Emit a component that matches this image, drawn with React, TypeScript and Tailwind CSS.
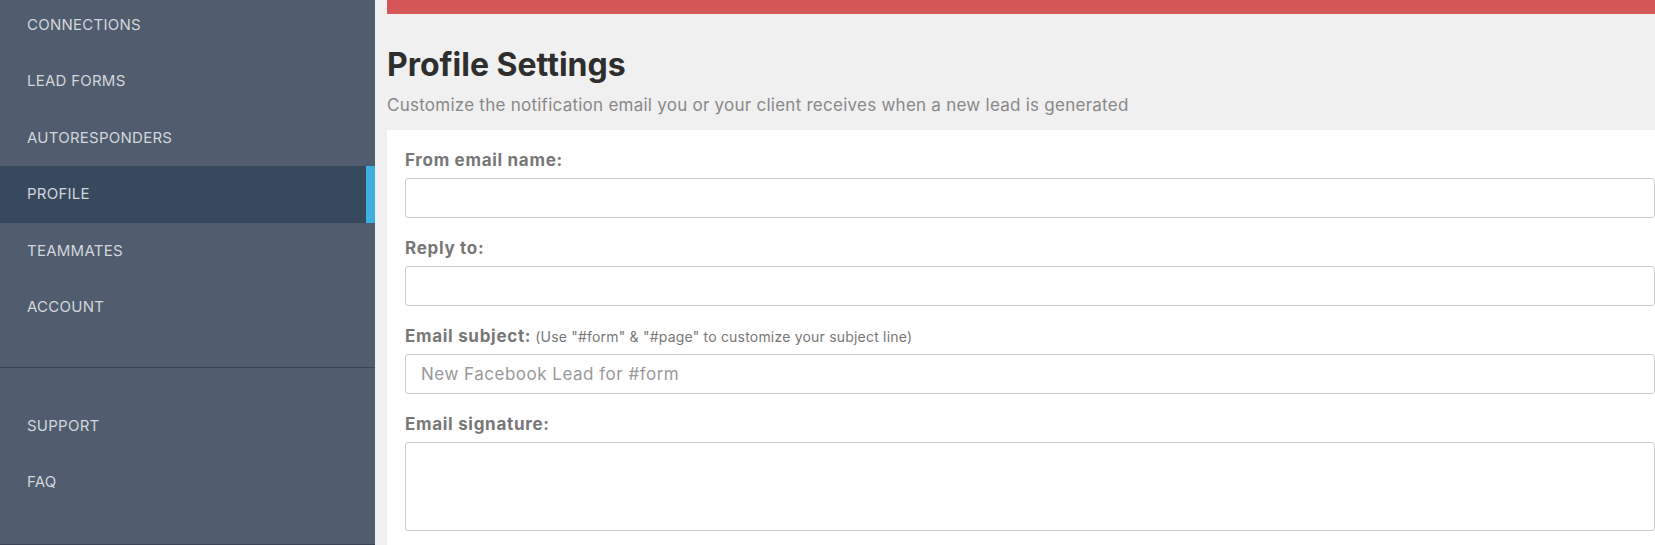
import React from 'react';

const font = { fontFamily: 'Inter, "Noto Sans", sans-serif' };

const navTop = ['CONNECTIONS', 'LEAD FORMS', 'AUTORESPONDERS', 'PROFILE', 'TEAMMATES', 'ACCOUNT'];
const navBottom = ['SUPPORT', 'FAQ'];

function NavItem({ label, active, tall }: { label: string; active?: boolean; tall?: boolean }) {
  return (
    <div
      className={`relative flex items-center pl-[27px] text-[15px] tracking-[0.25px] text-[#d3d6db] ${
        tall ? 'h-[56.4px]' : 'h-14'
      } ${active ? 'bg-[#37495d]' : ''}`}
    >
      {label}
      {active && <span className="absolute right-0 top-0 h-full w-[9px] bg-[#3eb0e0]" />}
    </div>
  );
}

function Label({ text, hint }: { text: string; hint?: string }) {
  return (
    <label className="block h-5 leading-5 mb-2 text-[17px] tracking-[0.7px] font-bold text-[#777] whitespace-nowrap">
      {text}
      {hint && <span className="font-normal text-[14px] tracking-[0.2px] ml-1">{hint}</span>}
    </label>
  );
}

function Field({ label, hint, placeholder }: { label: string; hint?: string; placeholder?: string }) {
  return (
    <div className="mb-5">
      <Label text={label} hint={hint} />
      <input
        className="block w-full h-10 rounded-[3px] border border-[#ccc] bg-white px-[15px] text-[17px] tracking-[0.5px] text-[#555] placeholder:text-[#999] outline-none"
        placeholder={placeholder}
        style={font}
      />
    </div>
  );
}

export default function App() {
  return (
    <div className="flex h-[545px] w-full overflow-hidden bg-[#f0f0f0]" style={font}>
      <aside className="w-[375px] shrink-0 bg-[#4f5d6e] overflow-hidden">
        <div className="-mt-[3px]">
          {navTop.map((l) => (
            <NavItem key={l} label={l} active={l === 'PROFILE'} tall />
          ))}
        </div>
        <div className="h-8" />
        <div className="border-t border-[#3a4656] pt-[30px] pb-[34px] border-b">
          {navBottom.map((l) => (
            <NavItem key={l} label={l} />
          ))}
        </div>
      </aside>

      <main className="flex-1 min-w-0 pl-3">
        <div className="h-[14px] bg-[#d55657]" />
        <h1 className="mt-[33px] text-[32px] leading-9 font-bold text-[#2e2e2e]">Profile Settings</h1>
        <p className="mt-[10px] text-[17px] tracking-[0.25px] leading-6 text-[#888]">
          Customize the notification email you or your client receives when a new lead is generated
        </p>
        <div className="mt-[13px] bg-white pl-[18px] pt-5 pb-4">
          <Field label="From email name:" />
          <Field label="Reply to:" />
          <Field
            label="Email subject:"
            hint={'(Use "#form" & "#page" to customize your subject line)'}
            placeholder="New Facebook Lead for #form"
          />
          <div>
            <Label text="Email signature:" />
            <textarea
              className="block w-full h-[89px] rounded-[3px] border border-[#ccc] bg-white px-[15px] py-2 text-[17px] outline-none resize-none"
              style={font}
            />
          </div>
        </div>
      </main>
    </div>
  );
}
